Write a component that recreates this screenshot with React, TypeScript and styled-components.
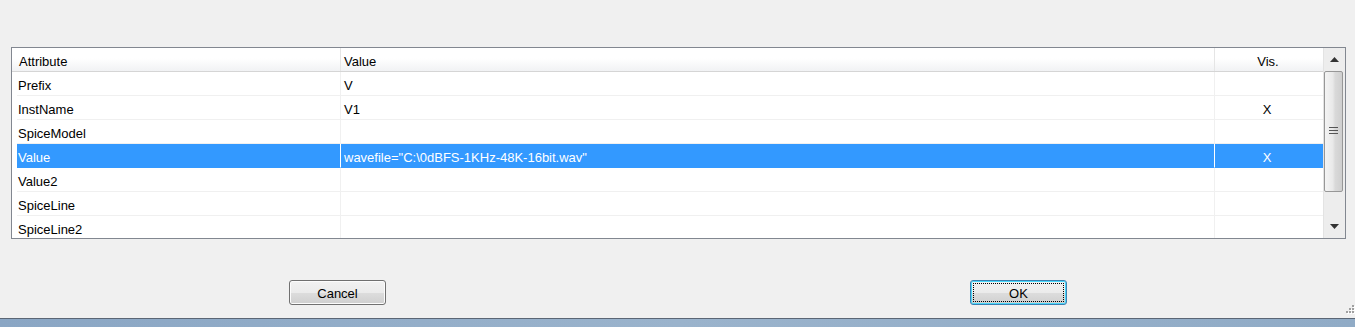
import styled, { createGlobalStyle } from "styled-components";

const GlobalStyle = createGlobalStyle`
  html, body {
    margin: 0;
    padding: 0;
    background: #f0f0f0;
  }
  body {
    font-family: "Liberation Sans", Arial, sans-serif;
    font-size: 13px;
    color: #000;
  }
`;

const Window = styled.div`
  width: 1355px;
  height: 327px;
  display: flex;
  flex-direction: column;
  box-sizing: border-box;
  padding-top: 47px;
  overflow: hidden;
`;

const Table = styled.div`
  margin: 0 9px 0 11px;
  height: 192px;
  box-sizing: border-box;
  border: 1px solid #828790;
  background: #fff;
  display: flex;
`;

const GridArea = styled.div`
  flex: 1;
  display: flex;
  flex-direction: column;
  overflow: hidden;
`;

const HeaderRow = styled.div`
  display: grid;
  grid-template-columns: 329px 874px 108px;
  height: 24px;
  box-sizing: border-box;
  border-bottom: 1px solid #d5d5d5;
  background: linear-gradient(#ffffff 0%, #ffffff 45%, #f1f2f4 100%);
  flex-shrink: 0;
`;

const HeaderCell = styled.div<{ $first?: boolean; $center?: boolean; $last?: boolean }>`
  display: flex;
  align-items: center;
  justify-content: ${(p) => (p.$center ? "center" : "flex-start")};
  padding-left: ${(p) => (p.$center ? "0" : p.$first ? "7px" : "3px")};
  padding-right: ${(p) => (p.$center ? "2px" : "0")};
  padding-top: 3px;
  box-sizing: border-box;
  border-right: ${(p) => (p.$last ? "none" : "1px solid #e5e5e5")};
  white-space: nowrap;
`;

const Body = styled.div`
  padding-left: 5px;
  display: flex;
  flex-direction: column;
`;

const Row = styled.div<{ $selected?: boolean }>`
  display: grid;
  grid-template-columns: 324px 874px 108px;
  height: 24px;
  flex-shrink: 0;
  background: ${(p) => (p.$selected ? "#3399ff" : "#fff")};
  color: ${(p) => (p.$selected ? "#fff" : "#000")};
`;

const Cell = styled.div<{ $first?: boolean; $center?: boolean; $last?: boolean; $selected?: boolean }>`
  display: flex;
  align-items: center;
  justify-content: ${(p) => (p.$center ? "center" : "flex-start")};
  padding-left: ${(p) => (p.$center ? "0" : p.$first ? "1px" : "3px")};
  padding-right: ${(p) => (p.$center ? "4px" : "0")};
  padding-top: 3px;
  box-sizing: border-box;
  border-bottom: 1px solid ${(p) => (p.$selected ? "#3399ff" : "#f0f0f0")};
  border-right: ${(p) => (p.$last ? "none" : `1px solid ${p.$selected ? "#ffffff" : "#f0f0f0"}`)};
  white-space: nowrap;
`;

const ScrollBar = styled.div`
  width: 22px;
  flex-shrink: 0;
  box-sizing: border-box;
  border-left: 1px solid #e3e3e3;
  background: #ededed;
  display: flex;
  flex-direction: column;
  padding: 0 1px 0 0;
`;

const ArrowButton = styled.div`
  height: 23px;
  display: flex;
  align-items: center;
  justify-content: center;
  flex-shrink: 0;
`;

const Thumb = styled.div`
  height: 121px;
  margin: 0 1px 0 0;
  box-sizing: border-box;
  border: 1px solid #979797;
  border-radius: 2px;
  background: linear-gradient(to right, #f4f4f4 0%, #e9e9e9 45%, #d9d9d9 60%, #cfcfcf 100%);
  display: flex;
  align-items: center;
  justify-content: center;
  padding-bottom: 2px;
`;

const Track = styled.div`
  flex: 1;
`;

const ButtonRow = styled.div`
  display: flex;
  margin-top: 41px;
  padding-left: 289px;
  gap: 584px;
`;

const Button = styled.button<{ $default?: boolean }>`
  position: relative;
  width: 97px;
  height: 25px;
  box-sizing: border-box;
  border: 1px solid ${(p) => (p.$default ? "#3c7fb1" : "#707070")};
  border-radius: 3px;
  background: linear-gradient(#f2f2f2 0%, #ebebeb 50%, #dddddd 51%, #cfcfcf 100%);
  box-shadow: ${(p) => (p.$default ? "inset 0 0 0 1px #48d8fb" : "inset 0 0 0 1px #fcfcfc")};
  font-family: "Liberation Sans", Arial, sans-serif;
  font-size: 13px;
  color: #000;
  padding: 1px 0 0 0;
  cursor: default;
`;

const FocusRing = styled.span`
  position: absolute;
  inset: 2px;
  border: 1px dotted #000;
  pointer-events: none;
`;

const Footer = styled.div`
  margin-top: auto;
  position: relative;
  height: 22px;
  display: flex;
  flex-direction: column;
  justify-content: flex-end;
`;

const Grip = styled.svg`
  position: absolute;
  right: 0;
  top: 0;
`;

const StatusBar = styled.div`
  height: 8px;
  border-top: 1px solid #5b6675;
  background: linear-gradient(to right, #8aa6c4, #9ab3cc 50%, #90abc6);
`;

const rows = [
  { attr: "Prefix", value: "V", vis: "" },
  { attr: "InstName", value: "V1", vis: "X" },
  { attr: "SpiceModel", value: "", vis: "" },
  { attr: "Value", value: 'wavefile="C:\\0dBFS-1KHz-48K-16bit.wav"', vis: "X", selected: true },
  { attr: "Value2", value: "", vis: "" },
  { attr: "SpiceLine", value: "", vis: "" },
  { attr: "SpiceLine2", value: "", vis: "" },
];

export default function App() {
  return (
    <>
      <GlobalStyle />
      <Window>
        <Table>
          <GridArea>
            <HeaderRow>
              <HeaderCell $first>Attribute</HeaderCell>
              <HeaderCell>Value</HeaderCell>
              <HeaderCell $center $last>
                Vis.
              </HeaderCell>
            </HeaderRow>
            <Body>
              {rows.map((r) => (
                <Row key={r.attr} $selected={r.selected}>
                  <Cell $first $selected={r.selected}>
                    {r.attr}
                  </Cell>
                  <Cell $selected={r.selected}>{r.value}</Cell>
                  <Cell $center $last $selected={r.selected}>
                    {r.vis}
                  </Cell>
                </Row>
              ))}
            </Body>
          </GridArea>
          <ScrollBar>
            <ArrowButton>
              <svg width="9" height="5" viewBox="0 0 9 5">
                <path d="M4.5 0 L9 5 L0 5 Z" fill="#333" />
              </svg>
            </ArrowButton>
            <Thumb>
              <svg width="9" height="7" viewBox="0 0 9 7">
                <rect x="0" y="0" width="9" height="1" fill="#555" />
                <rect x="0" y="3" width="9" height="1" fill="#555" />
                <rect x="0" y="6" width="9" height="1" fill="#555" />
              </svg>
            </Thumb>
            <Track />
            <ArrowButton>
              <svg width="9" height="5" viewBox="0 0 9 5">
                <path d="M0 0 L9 0 L4.5 5 Z" fill="#333" />
              </svg>
            </ArrowButton>
          </ScrollBar>
        </Table>
        <ButtonRow>
          <Button>Cancel</Button>
          <Button $default>
            OK
            <FocusRing />
          </Button>
        </ButtonRow>
        <Footer>
          <Grip width="12" height="12" viewBox="0 0 12 12">
            {[
              [9, 0],
              [6, 3],
              [9, 3],
              [3, 6],
              [6, 6],
              [9, 6],
            ].map(([x, y]) => (
              <g key={`${x}-${y}`}>
                <rect x={x + 1} y={y + 1} width="2" height="2" fill="#fff" />
                <rect x={x} y={y} width="2" height="2" fill="#a0a0a0" />
              </g>
            ))}
          </Grip>
          <StatusBar />
        </Footer>
      </Window>
    </>
  );
}
